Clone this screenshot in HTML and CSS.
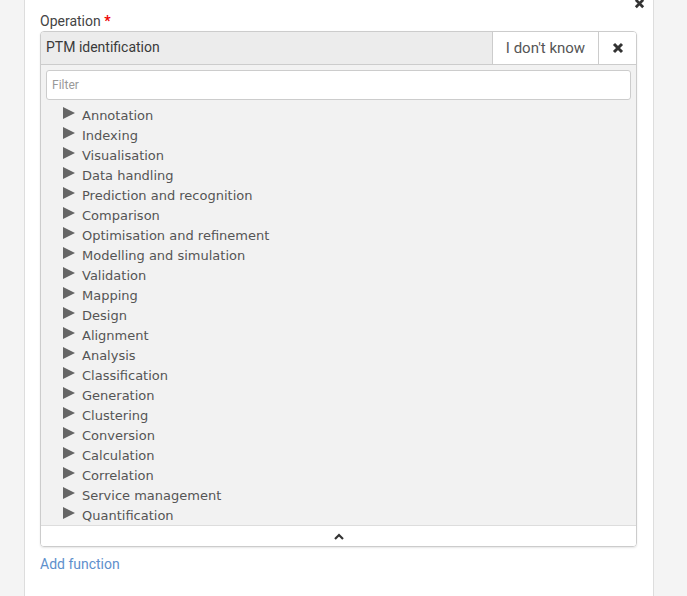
FILE: index.html
```html
<!DOCTYPE html>
<html lang="en">
<head>
    <meta charset="UTF-8">
    <title>Operation</title>
    <link rel="stylesheet" href="styles.css">
</head>
<body>
    <div class="panel">
        <button class="panel-close" title="Remove">
            <svg viewBox="0 0 12 12"><path d="M2 2l8 8M10 2l-8 8"/></svg>
        </button>
        <label class="field-label">Operation <span class="required">*</span></label>
        <div class="picker">
            <div class="picker-head">
                <div class="picker-value">PTM identification</div>
                <button class="picker-unknown">I don't know</button>
                <button class="picker-clear" title="Clear">
                    <svg viewBox="0 0 12 12"><path d="M2 2l8 8M10 2l-8 8"/></svg>
                </button>
            </div>
            <div class="picker-body">
                <input class="picker-filter" type="text" placeholder="Filter">
                <ul class="tree">
                    <li><span class="tree-arrow"></span>Annotation</li>
                    <li><span class="tree-arrow"></span>Indexing</li>
                    <li><span class="tree-arrow"></span>Visualisation</li>
                    <li><span class="tree-arrow"></span>Data handling</li>
                    <li><span class="tree-arrow"></span>Prediction and recognition</li>
                    <li><span class="tree-arrow"></span>Comparison</li>
                    <li><span class="tree-arrow"></span>Optimisation and refinement</li>
                    <li><span class="tree-arrow"></span>Modelling and simulation</li>
                    <li><span class="tree-arrow"></span>Validation</li>
                    <li><span class="tree-arrow"></span>Mapping</li>
                    <li><span class="tree-arrow"></span>Design</li>
                    <li><span class="tree-arrow"></span>Alignment</li>
                    <li><span class="tree-arrow"></span>Analysis</li>
                    <li><span class="tree-arrow"></span>Classification</li>
                    <li><span class="tree-arrow"></span>Generation</li>
                    <li><span class="tree-arrow"></span>Clustering</li>
                    <li><span class="tree-arrow"></span>Conversion</li>
                    <li><span class="tree-arrow"></span>Calculation</li>
                    <li><span class="tree-arrow"></span>Correlation</li>
                    <li><span class="tree-arrow"></span>Service management</li>
                    <li><span class="tree-arrow"></span>Quantification</li>
                </ul>
            </div>
            <div class="picker-foot">
                <svg viewBox="0 0 10 7"><path d="M1 6l4-4 4 4"/></svg>
            </div>
        </div>
        <a class="add-link" href="#">Add function</a>
    </div>
</body>
</html>
```

FILE: styles.css
```css
* {
    box-sizing: border-box;
    margin: 0;
    padding: 0;
}

body {
    font-family: Roboto, "Liberation Sans", sans-serif;
    background-color: #f4f4f4;
    color: #333;
}

/* Panel blanco */
.panel {
    position: relative;
    margin-left: 24px;
    width: 630px;
    min-height: 596px;
    background-color: #fff;
    border-left: 1px solid #ddd;
    border-right: 1px solid #ddd;
    padding: 11px 16px 0 15px;
}

.panel-close {
    position: absolute;
    top: -2px;
    right: 8px;
    width: 11px;
    height: 11px;
    border: none;
    background: none;
    display: flex;
}

.panel-close svg, .picker-clear svg {
    width: 100%;
    height: 100%;
    stroke: #333;
    stroke-width: 3;
    fill: none;
}

.field-label {
    display: block;
    font-size: 14px;
    line-height: 20px;
    color: #444;
}

.required {
    color: #e00;
    font-weight: bold;
}

/* Selector */
.picker {
    border: 1px solid #ccc;
    border-radius: 4px;
    box-shadow: 0 1px 2px rgba(0, 0, 0, 0.1);
    overflow: hidden;
}

.picker-head {
    display: flex;
    height: 33px;
    background-color: #ececec;
    border-bottom: 1px solid #ccc;
}

.picker-value {
    flex: 1;
    padding: 0 5px;
    font-size: 14px;
    line-height: 31px;
    color: #3a3a3a;
}

.picker-unknown {
    width: 106px;
    border: none;
    border-left: 1px solid #ccc;
    background-color: #fff;
    font-family: Roboto, "Liberation Sans", sans-serif;
    font-size: 15px;
    color: #555;
}

.picker-clear {
    width: 38px;
    border: none;
    border-left: 1px solid #ccc;
    background-color: #fff;
    display: flex;
    align-items: center;
    justify-content: center;
}

.picker-clear svg {
    width: 12px;
    height: 12px;
}

.picker-body {
    background-color: #f2f2f2;
    padding: 5px 5px 0;
}

.picker-filter {
    display: block;
    width: 100%;
    height: 30px;
    border: 1px solid #ccc;
    border-radius: 3px;
    padding: 0 5px;
    font-family: Roboto, "Liberation Sans", sans-serif;
    font-size: 12px;
    background-color: #fff;
}

.picker-filter::placeholder {
    color: #999;
}

.tree {
    list-style: none;
    margin-top: 5px;
    padding-left: 17px;
}

.tree li {
    display: flex;
    align-items: center;
    height: 20px;
    font-family: "DejaVu Sans", Verdana, sans-serif;
    font-size: 13px;
    color: #555;
}

.tree-arrow {
    width: 0;
    height: 0;
    border-top: 6px solid transparent;
    border-bottom: 6px solid transparent;
    border-left: 12px solid #666;
    margin-right: 7px;
    margin-top: -4px;
}

.picker-foot {
    height: 21px;
    background-color: #fff;
    border-top: 1px solid #ddd;
    display: flex;
    align-items: center;
    justify-content: center;
}

.picker-foot svg {
    width: 10px;
    height: 7px;
    stroke: #333;
    stroke-width: 2.2;
    fill: none;
}

.add-link {
    display: inline-block;
    margin-top: 7px;
    font-size: 14px;
    line-height: 20px;
    color: #5e90cc;
    text-decoration: none;
}
```
